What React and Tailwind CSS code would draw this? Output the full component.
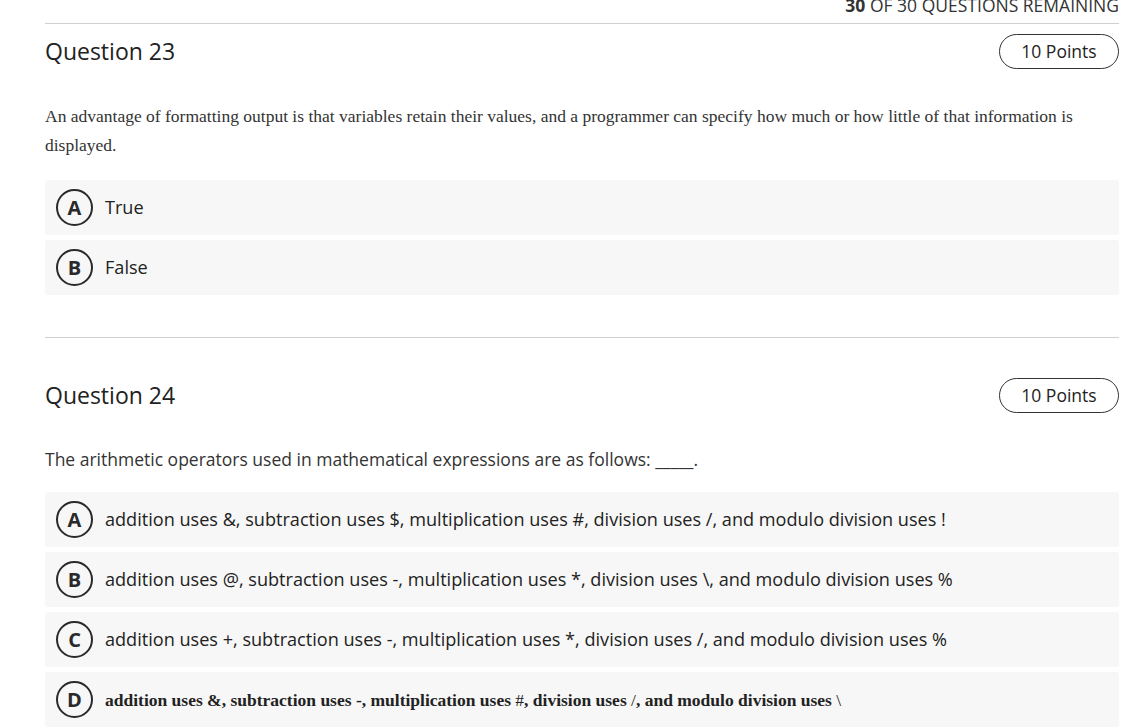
const questions = [
  {
    num: 23,
    points: 10,
    serif: true,
    text: "An advantage of formatting output is that variables retain their values, and a programmer can specify how much or how little of that information is displayed.",
    options: [{ letter: "A", label: "True" }, { letter: "B", label: "False" }],
  },
  {
    num: 24,
    points: 10,
    serif: false,
    text: "The arithmetic operators used in mathematical expressions are as follows: _____.",
    options: [
      { letter: "A", label: "addition uses &, subtraction uses $, multiplication uses #, division uses /, and modulo division uses !" },
      { letter: "B", label: "addition uses @, subtraction uses -, multiplication uses *, division uses \\, and modulo division uses %" },
      { letter: "C", label: "addition uses +, subtraction uses -, multiplication uses *, division uses /, and modulo division uses %" },
      {
        letter: "D",
        label: (
          <span className="font-['Liberation_Serif',serif] text-[17.5px] font-bold">
            addition uses &amp;, subtraction uses -, multiplication uses <span className="font-normal">#</span>, division uses{" "}
            <span className="font-normal">/</span>, and modulo division uses <span className="font-normal">\</span>
          </span>
        ),
      },
    ],
  },
];

function Option({ letter, label }) {
  return (
    <div className="flex h-[55px] items-center rounded-[3px] bg-[#f7f7f7] pl-[11px]">
      <div className="flex h-[37px] w-[37px] shrink-0 items-center justify-center rounded-full border-2 border-[#2a2a2a] text-[20px] font-bold text-[#2a2a2a]">
        {letter}
      </div>
      <div className="ml-[12px] text-[18.1px] text-[#222]">{label}</div>
    </div>
  );
}

export default function App() {
  return (
    <div className="min-h-screen bg-white font-['Open_Sans',sans-serif] text-[#222]">
      <div className="ml-[45px] w-[1074px]">
        {/* Header */}
        <div className="-mt-[7px] border-b border-[#cfcfcf] pb-[5px] text-right text-[17.5px] leading-[25px] text-[#333]">
          <span className="font-bold">30</span> OF 30 QUESTIONS REMAINING
        </div>

        {questions.map((q, i) => (
          <div
            key={q.num}
            className={i === 0 ? "border-b border-[#d0d0d0] pt-[10px] pb-[42px]" : "pt-[40px]"}
          >
            <div className="flex h-[35px] items-center justify-between">
              <h2 className="text-[23px] text-[#222]">Question {q.num}</h2>
              <div className="flex h-[35px] w-[120px] items-center justify-center rounded-full border border-[#333] text-[17.5px] text-[#222]">
                {q.points} Points
              </div>
            </div>

            {q.serif ? (
              <p className="mt-[33px] font-['Liberation_Serif',serif] text-[17.5px] leading-[29px] text-[#333]">{q.text}</p>
            ) : (
              <p className="mt-[32px] text-[17.5px] leading-[29px] text-[#333]">{q.text}</p>
            )}

            <div className={(q.serif ? "mt-[20px]" : "mt-[18px]") + " flex flex-col gap-[5px]"}>
              {q.options.map((o) => (
                <Option key={o.letter} letter={o.letter} label={o.label} />
              ))}
            </div>
          </div>
        ))}
      </div>
    </div>
  );
}
